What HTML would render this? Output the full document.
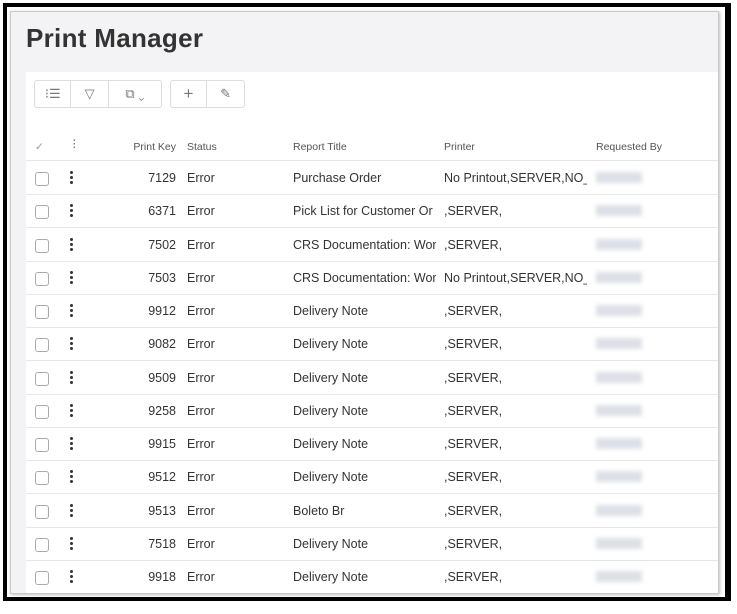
<!DOCTYPE html>
<html><head><style>
*{margin:0;padding:0;box-sizing:border-box}
body{width:737px;height:614px;background:#fff;position:relative;overflow:hidden;font-family:"Liberation Sans",sans-serif;color:#333}
.frame{position:absolute;left:3px;top:3px;width:728px;height:598px;border:4px solid #000;border-right-width:6px;background:#fff}
.gray{position:absolute;left:3px;top:4px;width:709px;height:583px;background:#f3f3f5;border:1px solid #c8c8cc;box-shadow:1px 1px 3px rgba(0,0,0,.25);overflow:hidden}
h1{position:absolute;left:15px;top:11px;font-size:26px;font-weight:bold;color:#333;letter-spacing:.3px}
.panel{position:absolute;left:15px;top:60px;width:692px;height:522px;background:#fff}
.tb{position:absolute;top:8px;height:28px;border:1px solid #ddd;border-radius:3px;display:flex;background:#fff}
.tb div{border-right:1px solid #ddd;display:flex;align-items:center;justify-content:center;color:#777;font-size:13px}
.tb div:last-child{border-right:none}
.row{position:absolute;left:0;width:692px;height:33px;border-bottom:1px solid #e6e6e6;font-size:12.5px}
.row span{position:absolute;top:9px;white-space:nowrap}
.hd span{font-size:10.5px;color:#555;top:12px}
.cb{position:absolute;left:9px;top:10px;width:14px;height:14px;border:1px solid #aaa;border-radius:3px}
.dots{position:absolute;left:44px;top:9px;width:3px}
.dots i{display:block;width:3px;height:3px;background:#333;border-radius:50%;margin-bottom:2px}
.blur{position:absolute;left:570px;top:10px;width:46px;height:11px;background:#dde0e6;filter:blur(2px)}
.pk{left:110px;width:40px;text-align:right}
</style></head><body>
<div class="frame"><div class="gray">
<h1>Print Manager</h1>
<div class="panel">
<div class="tb" style="left:8px;width:128px">
<div style="width:37px">⁝☰</div><div style="width:38px">▽</div><div style="width:53px">⧉ ⌄</div></div>
<div class="tb" style="left:144px;width:75px"><div style="width:37px;font-size:17px">+</div><div style="width:38px">✎</div></div>
<div class="row hd" style="top:57px;height:32px">
<span style="left:9px;top:12px;color:#999">✓</span>
<span style="left:43px;top:9px;color:#555">⋮</span>
<span class="pk" style="left:90px;width:60px">Print Key</span>
<span style="left:161px">Status</span>
<span style="left:267px">Report Title</span>
<span style="left:418px">Printer</span>
<span style="left:570px">Requested By</span>
</div>
<div id="rows"></div>
</div></div></div>
<script>
var d=[["7129","Purchase Order","No Printout,SERVER,NO_I"],["6371","Pick List for Customer Or",",SERVER,"],["7502","CRS Documentation: Wor",",SERVER,"],["7503","CRS Documentation: Wor","No Printout,SERVER,NO_I"],["9912","Delivery Note",",SERVER,"],["9082","Delivery Note",",SERVER,"],["9509","Delivery Note",",SERVER,"],["9258","Delivery Note",",SERVER,"],["9915","Delivery Note",",SERVER,"],["9512","Delivery Note",",SERVER,"],["9513","Boleto Br",",SERVER,"],["7518","Delivery Note",",SERVER,"],["9918","Delivery Note",",SERVER,"]];
var h="";d.forEach(function(r,i){var t=90+i*33.25;
h+='<div class="row" style="top:'+t+'px"><div class="cb"></div><div class="dots"><i></i><i></i><i></i></div><span class="pk">'+r[0]+'</span><span style="left:161px">Error</span><span style="left:267px;width:143px;overflow:hidden">'+r[1]+'</span><span style="left:418px;width:143px;overflow:hidden">'+r[2]+'</span><div class="blur"></div></div>';});
document.getElementById("rows").innerHTML=h;
</script>
</body></html>
